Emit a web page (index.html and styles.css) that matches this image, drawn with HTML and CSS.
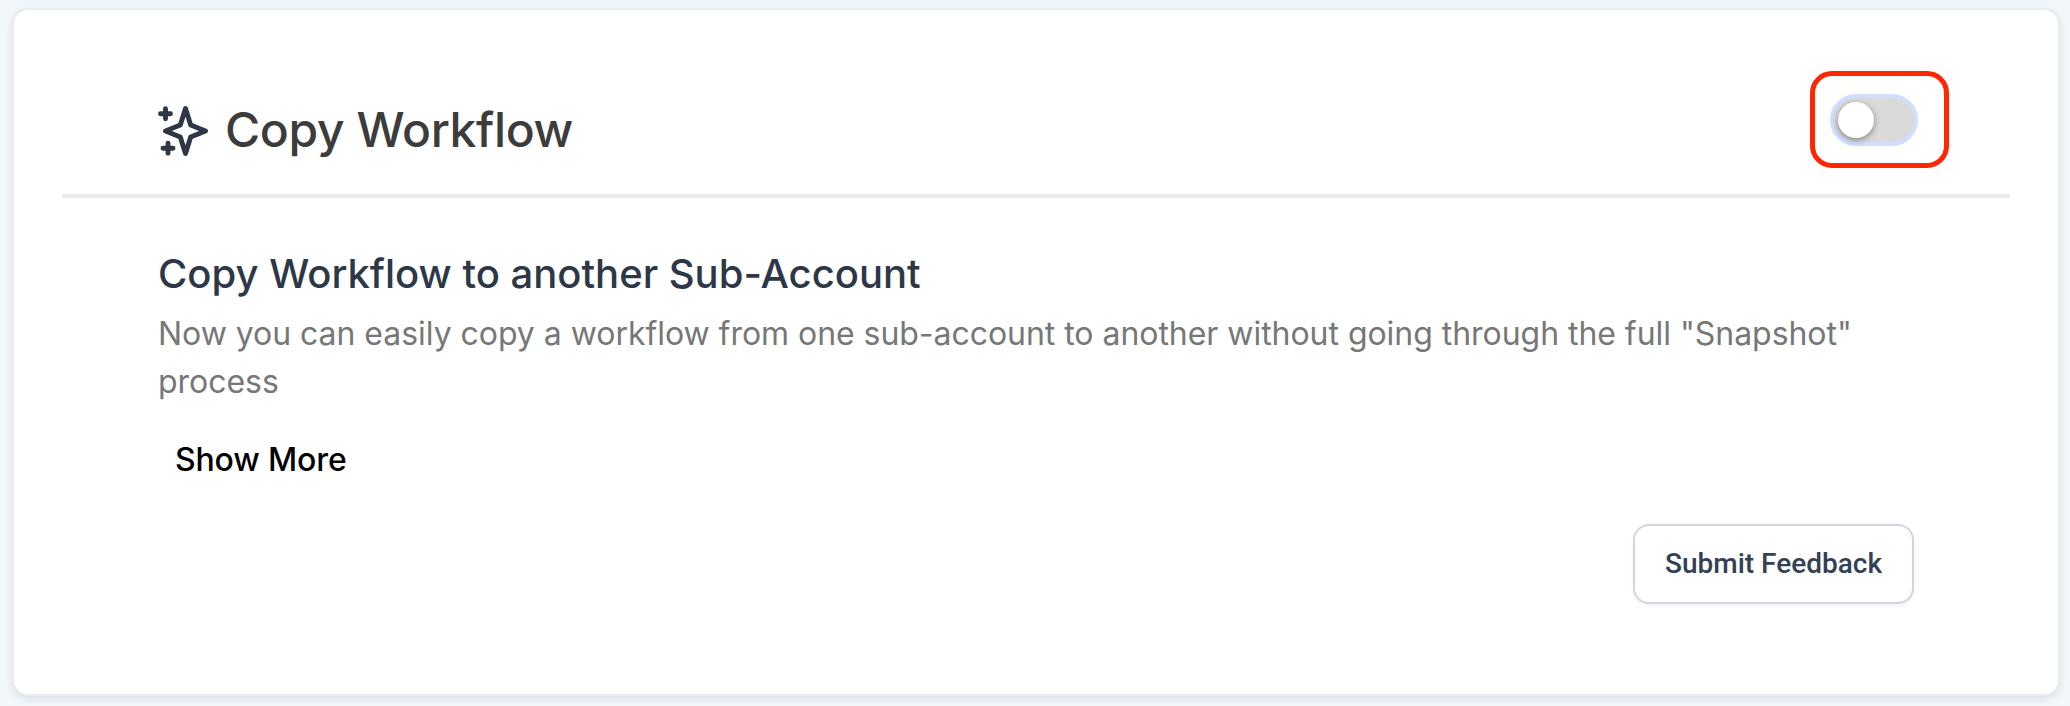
FILE: index.html
```html
<!DOCTYPE html>
<html lang="en">
<head>
<meta charset="utf-8">
<title>Copy Workflow</title>
<link rel="stylesheet" href="styles.css">
</head>
<body>
<main class="card">
  <header class="header">
    <svg class="sparkles" viewBox="0 0 52 52" fill="none" stroke="currentColor" stroke-width="4.9" stroke-linecap="round" stroke-linejoin="round"><path d="M27.5 3.5L32.7 20L47.5 26L32.7 32L27.5 48.5L22.3 32L7.5 26L22.3 20Z"/><path d="M7.5 3.7V13.7M2.5 8.7H12.5M10 38.3V48.3M5 43.3H15"/></svg>
    <h1 class="title">Copy Workflow</h1>
    <div class="highlight"><button class="switch" role="switch" aria-checked="false" aria-label="Copy Workflow"><span class="knob"></span></button></div>
  </header>
  <section class="content">
    <h2 class="subtitle">Copy Workflow to another Sub-Account</h2>
    <p class="description">Now you can easily copy a workflow from one sub-account to another without going through the full "Snapshot" process</p>
    <button class="more">Show More</button>
    <div class="actions"><button class="feedback">Submit Feedback</button></div>
  </section>
</main>
</body>
</html>
```
FILE: styles.css
```css
* { box-sizing: border-box; }
body { margin: 0; height: 706px; padding: 10px 12px 12px 14px; background: #f1f6fa; font-family: Inter, sans-serif; overflow: hidden; }
button { border: 0; background: none; padding: 0; font: inherit; }
.card { height: 684px; background: #fff; border-radius: 14px; padding: 0 48px; box-shadow: 0 0 0 2px #e8ebef, 0 3px 8px rgba(16,24,40,.14); }
.header { height: 188px; border-bottom: 4px solid #eaebef; padding: 61px 61px 0 96px; display: flex; align-items: flex-start; }
.sparkles { width: 52px; height: 52px; margin-top: 34px; color: #2d3748; }
.title { margin: 30px 0 0 15px; font-size: 48px; line-height: 58px; font-weight: 450; letter-spacing: -0.35px; color: #3c3c3c; }
.highlight { margin-left: auto; width: 139px; height: 97px; border: 5px solid #ff2600; border-radius: 22px; padding: 18px 0 0 15px; }
.switch { display: block; width: 88px; height: 52px; padding: 4px; border: 4px solid #d0deff; border-radius: 26px; background: #dadada; }
.knob { display: block; width: 36px; height: 36px; border-radius: 50%; background: #fff; box-shadow: 0 2px 6px rgba(0,0,0,.4); }
.content { padding: 52px 96px 0; }
.subtitle { margin: 0; font-size: 40px; line-height: 48px; font-weight: 500; color: #2d3748; }
.description { margin: 12px 0 0; font-size: 32px; line-height: 48px; letter-spacing: -0.04px; color: #777; }
.more { margin: 30px 0 0 17px; font-size: 32px; line-height: 48px; font-weight: 500; letter-spacing: -0.15px; color: #000; display: block; }
.actions { display: flex; justify-content: flex-end; margin-top: 40px; }
.feedback { width: 281px; height: 80px; padding-bottom: 2px; border: 2px solid #d0d5e1; border-radius: 16px; box-shadow: 0 2px 4px rgba(16,24,40,.05); font: 500 28px Roboto, sans-serif; color: #344054; }
```
